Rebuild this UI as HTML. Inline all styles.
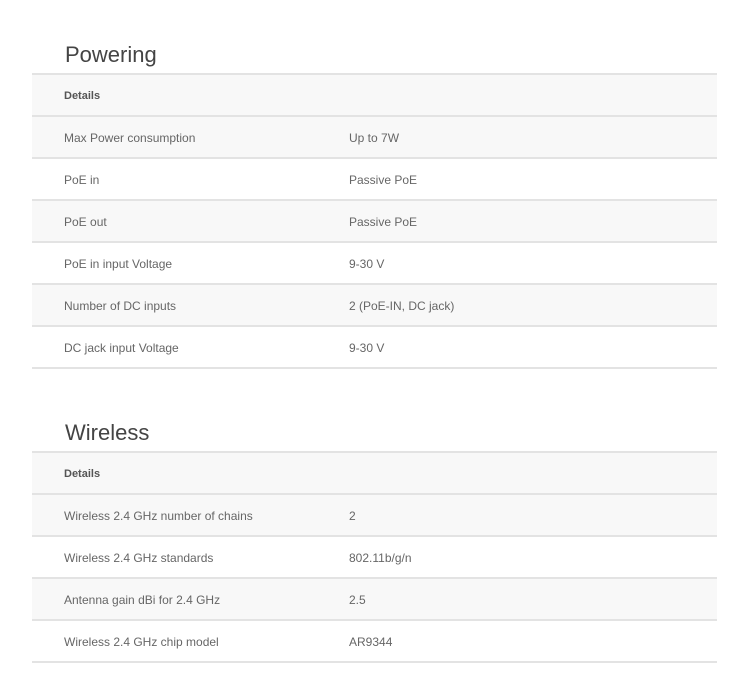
<!DOCTYPE html><html><head><style>
body{margin:0;background:#fff;font-family:"Liberation Sans",Arial,sans-serif;color:#666;width:750px;height:675px;overflow:hidden;position:relative}
h2{position:absolute;left:65px;margin:0;font-weight:normal;font-size:22px;color:#444;line-height:26px}
.t{position:absolute;left:32px;width:685px;border-top:2px solid #e3e3e3}
.r{height:40px;border-bottom:2px solid #e3e3e3;font-size:12px;line-height:42px;position:relative}
.r span{position:absolute;left:32px}.r b{position:absolute;left:317px;font-weight:normal}
.g{background:#f8f8f8}.h{font-weight:bold;color:#555;font-size:11px}
</style></head><body>
<h2 style="top:42px">Powering</h2>
<div class="t" style="top:73px">
<div class="r g h"><span>Details</span></div>
<div class="r g"><span>Max Power consumption</span><b>Up to 7W</b></div>
<div class="r"><span>PoE in</span><b>Passive PoE</b></div>
<div class="r g"><span>PoE out</span><b>Passive PoE</b></div>
<div class="r"><span>PoE in input Voltage</span><b>9-30 V</b></div>
<div class="r g"><span>Number of DC inputs</span><b>2 (PoE-IN, DC jack)</b></div>
<div class="r"><span>DC jack input Voltage</span><b>9-30 V</b></div>
</div>
<h2 style="top:420px">Wireless</h2>
<div class="t" style="top:451px">
<div class="r g h"><span>Details</span></div>
<div class="r g"><span>Wireless 2.4 GHz number of chains</span><b>2</b></div>
<div class="r"><span>Wireless 2.4 GHz standards</span><b>802.11b/g/n</b></div>
<div class="r g"><span>Antenna gain dBi for 2.4 GHz</span><b>2.5</b></div>
<div class="r"><span>Wireless 2.4 GHz chip model</span><b>AR9344</b></div>
</div>
</body></html>
